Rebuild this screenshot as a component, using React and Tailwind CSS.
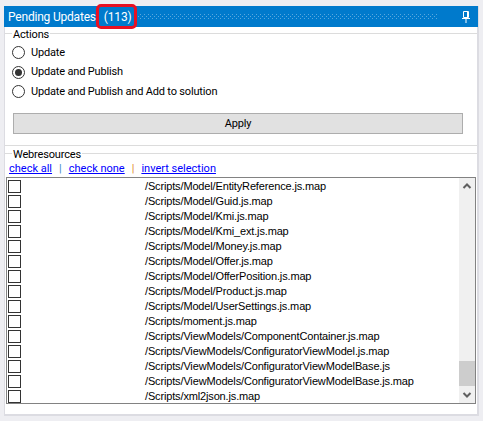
const ROWS = [
  "/Scripts/Model/EntityReference.js.map",
  "/Scripts/Model/Guid.js.map",
  "/Scripts/Model/Kmi.js.map",
  "/Scripts/Model/Kmi_ext.js.map",
  "/Scripts/Model/Money.js.map",
  "/Scripts/Model/Offer.js.map",
  "/Scripts/Model/OfferPosition.js.map",
  "/Scripts/Model/Product.js.map",
  "/Scripts/Model/UserSettings.js.map",
  "/Scripts/moment.js.map",
  "/Scripts/ViewModels/ComponentContainer.js.map",
  "/Scripts/ViewModels/ConfiguratorViewModel.js.map",
  "/Scripts/ViewModels/ConfiguratorViewModelBase.js",
  "/Scripts/ViewModels/ConfiguratorViewModelBase.js.map",
  "/Scripts/xml2json.js.map",
];

function Radio({ label, checked }) {
  return (
    <div className="flex h-[19.5px] items-center">
      <span className="ml-[7px] flex h-[13px] w-[13px] items-center justify-center rounded-full border border-[#333333] bg-white">
        {checked && <span className="h-[7px] w-[7px] rounded-full bg-[#333333]" />}
      </span>
      <span className="ml-[6px]">{label}</span>
    </div>
  );
}

function Gripper() {
  return (
    <svg className="absolute left-[132px] top-[8px] h-[5px] w-[302px]" aria-hidden="true">
      <defs>
        <pattern id="grip" width="4" height="4" patternUnits="userSpaceOnUse">
          <rect x="0" y="0" width="1" height="1" fill="#59a8de" />
          <rect x="2" y="2" width="1" height="1" fill="#59a8de" />
        </pattern>
      </defs>
      <rect width="302" height="5" fill="url(#grip)" />
    </svg>
  );
}

function Pin() {
  return (
    <svg className="ml-auto mr-[8px] h-[12px] w-[8px]" viewBox="0 0 8 12" aria-hidden="true">
      <path d="M1.5 .5h5v6h-5z" fill="none" stroke="#fff" />
      <path d="M5 1v5h1V1zM0 7h8v1H0zM3.5 8h1v4h-1z" fill="#fff" />
    </svg>
  );
}

export default function App() {
  return (
    <div className="h-[421px] w-[483px] bg-[#eeeef2] pl-[4px] pt-[6px] font-['Roboto',sans-serif] text-[11px] tracking-[-0.17px] text-black">
      <div className="relative h-[410px] w-[475px] border-b-2 border-r-2 border-l border-[#dcdce2] bg-white">
        <div className="relative -ml-px -mr-[1px] flex h-[21px] items-center bg-[#007acc] pl-[4px] text-white">
          <span className="text-[12px] leading-none tracking-[-0.2px]">Pending Updates</span>
          <span className="ml-[8px] text-[12px] leading-none">(113)</span>
          <Gripper />
          <Pin />
        </div>

        <div className="mt-[6px] h-[113px] border-y border-[#dcdcdc]">
          <div className="-mt-[6px] ml-[7px] w-fit bg-white px-[1px] leading-[14px]">Actions</div>
          <div className="mt-[1px]">
            <Radio label="Update" />
            <Radio checked label="Update and Publish" />
            <Radio label="Update and Publish and Add to solution" />
          </div>
          <button className="ml-[8px] mt-[11px] block h-[21px] w-[450px] border border-[#adadad] bg-[#e1e1e1] leading-none">
            Apply
          </button>
        </div>

        <div className="mt-[7px] border-t border-[#dcdcdc]">
          <div className="-mt-[6px] ml-[7px] w-fit bg-white px-[1px] leading-[14px]">Webresources</div>
          <div className="-mt-[1px] ml-[4px] flex h-[16px] items-center tracking-normal text-[#0000ff]">
            <a className="underline">check all</a>
            <span className="mx-[7px] text-[#3a87c8]">|</span>
            <a className="underline">check none</a>
            <span className="mx-[7px] text-[#e08a2c]">|</span>
            <a className="underline">invert selection</a>
          </div>
          <div className="ml-px flex h-[227px] w-[470px] border border-[#828282]">
            <div className="min-w-0 flex-1 pl-[1px] pt-[1px] font-['Liberation_Sans',sans-serif] text-[11px] tracking-[-0.15px]">
              {ROWS.map((row) => (
                <div key={row} className="flex h-[15px] items-center">
                  <span className="h-[13px] w-[13px] shrink-0 border border-[#333333] bg-white" />
                  <span className="ml-[124px] whitespace-nowrap">{row}</span>
                </div>
              ))}
            </div>
            <div className="flex w-[16px] shrink-0 flex-col bg-[#f0f0f0]">
              <svg className="mt-[5px] h-[6px] w-[16px]" viewBox="0 0 16 6" aria-hidden="true">
                <path d="M4.5 5L8 1.5 11.5 5" fill="none" stroke="#606060" strokeWidth="2" />
              </svg>
              <div className="mt-[172px] h-[25px] w-[16px] bg-[#cdcdcd]" />
              <svg className="mt-[6px] h-[6px] w-[16px]" viewBox="0 0 16 6" aria-hidden="true">
                <path d="M4.5 1L8 4.5 11.5 1" fill="none" stroke="#606060" strokeWidth="2" />
              </svg>
            </div>
          </div>
        </div>

        <div className="absolute left-[91px] top-[-2px] h-[25px] w-[41px] rounded-[5px] border-[3px] border-[#e81123]" />
      </div>
    </div>
  );
}
